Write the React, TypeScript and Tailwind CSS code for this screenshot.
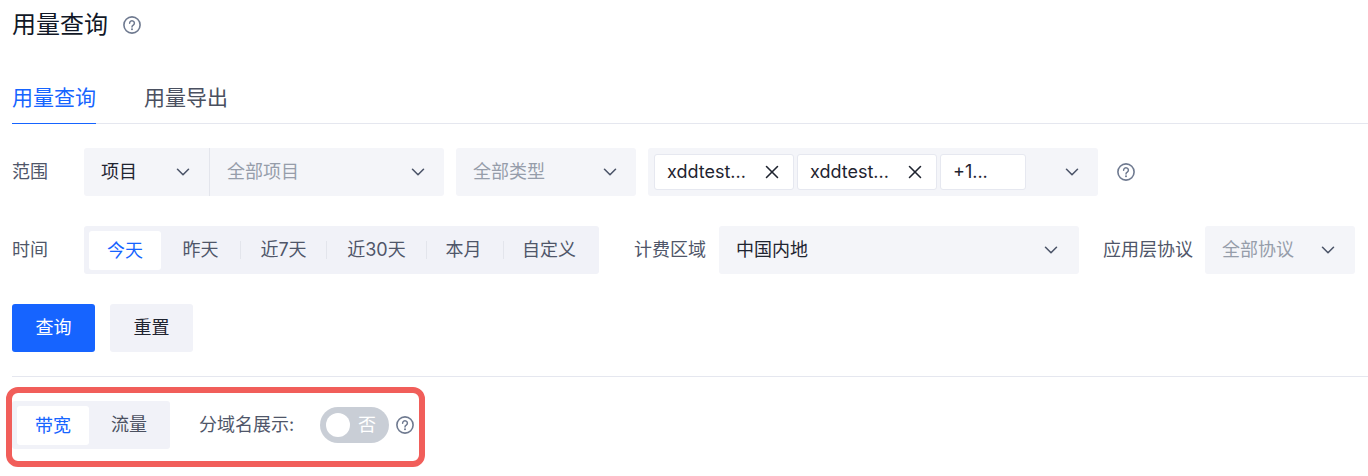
import { ChevronDown, X } from "lucide-react";

const font = "[font-family:Inter,'Noto_Sans_CJK_SC',sans-serif]";

function Help({ className = "" }: { className?: string }) {
  return (
    <svg width="18" height="18" viewBox="0 0 18 18" fill="none" className={className}>
      <circle cx="9" cy="9" r="8.1" stroke="#6f7a90" strokeWidth="1.6" />
      <path d="M6.6 7.2a2.4 2.4 0 1 1 3.7 2c-.8.5-1.3 1-1.3 1.8" stroke="#6f7a90" strokeWidth="1.5" strokeLinecap="round" />
      <circle cx="9" cy="13.2" r="1" fill="#6f7a90" />
    </svg>
  );
}

function Chevron() {
  return <ChevronDown size={22} strokeWidth={1.7} className="text-[#4b5468] shrink-0" />;
}

function Tag({ text, close = true, w }: { text: string; close?: boolean; w: string }) {
  return (
    <div className={`h-9 bg-white border border-[#e6e8f0] rounded-[3px] pl-[12px] pr-[10px] flex items-center justify-between text-[#1f2430] ${w}`}>
      <span>{text}</span>
      {close && <X size={22} strokeWidth={1.7} className="text-[#1f2430]" />}
    </div>
  );
}

export default function App() {
  return (
    <div className={`relative w-[1368px] h-[476px] overflow-hidden bg-white pl-3 text-[18px] leading-6 ${font}`}>
      <div className="h-[51px] pb-[2px] flex items-center gap-[15px] text-[24px] text-[#111827]">
        <span>用量查询</span>
        <Help />
      </div>

      {/* tabs */}
      <div className="mt-[23px] h-[50px] border-b border-[#e5e7ef] flex gap-12 text-[21px] text-[#4a5060]">
        <div className="h-[50px] pt-[12px] border-b border-[#1664ff] text-[#1664ff]">用量查询</div>
        <div className="pt-[12px]">用量导出</div>
      </div>

      {/* scope row */}
      <div className="mt-6 h-12 flex items-center text-[#4f5669]">
        <div className="w-[72px]">范围</div>
        <div className="w-[125px] h-12 bg-[#f4f5f9] rounded-l-[3px] pl-[17px] pr-[15px] flex items-center justify-between text-[#1f2430]">
          <span>项目</span>
          <Chevron />
        </div>
        <div className="w-px h-12 bg-[#e3e5ec]" />
        <div className="w-[234px] h-12 bg-[#f4f5f9] rounded-r-[3px] pl-[17px] pr-[15px] flex items-center justify-between text-[#969daa]">
          <span>全部项目</span>
          <Chevron />
        </div>
        <div className="ml-3 w-[180px] h-12 bg-[#f4f5f9] rounded-[3px] pl-[17px] pr-[15px] flex items-center justify-between text-[#969daa]">
          <span>全部类型</span>
          <Chevron />
        </div>
        <div className="ml-3 w-[450px] h-12 bg-[#f4f5f9] rounded-[3px] pl-[6px] pr-[15px] flex items-center gap-[3px]">
          <Tag text="xddtest..." w="w-[140px]" />
          <Tag text="xddtest..." w="w-[140px]" />
          <Tag text="+1..." close={false} w="w-[86px]" />
          <div className="ml-auto flex"><Chevron /></div>
        </div>
        <Help className="ml-[19px]" />
      </div>

      {/* time row */}
      <div className="mt-[30px] h-12 flex items-center text-[#4f5669]">
        <div className="w-[72px]">时间</div>
        <div className="w-[515px] h-12 bg-[#f1f2f8] rounded-[3px] pl-[5px] flex items-center text-center">
          <div className="w-[72px] h-[39px] bg-white rounded-[3px] text-[#1664ff] leading-[39px]">今天</div>
          <div className="w-[79px]">昨天</div>
          <div className="w-px h-[18px] bg-[#e3e5ec]" />
          <div className="w-[85px]">近7天</div>
          <div className="w-px h-[18px] bg-[#e3e5ec]" />
          <div className="w-[99px]">近30天</div>
          <div className="w-px h-[18px] bg-[#e3e5ec]" />
          <div className="w-[76px] pr-[3px]">本月</div>
          <div className="w-px h-[18px] bg-[#e3e5ec]" />
          <div className="w-[90px]">自定义</div>
        </div>
        <div className="ml-[35px]">计费区域</div>
        <div className="ml-[13px] w-[360px] h-12 bg-[#f4f5f9] rounded-[3px] pl-[17px] pr-[17px] flex items-center justify-between text-[#1f2430]">
          <span>中国内地</span>
          <Chevron />
        </div>
        <div className="ml-6">应用层协议</div>
        <div className="ml-3 w-[150px] h-12 bg-[#f4f5f9] rounded-[3px] pl-[17px] pr-[16px] flex items-center justify-between text-[#969daa]">
          <span>全部协议</span>
          <Chevron />
        </div>
      </div>

      {/* actions */}
      <div className="mt-[30px] flex gap-[15px]">
        <button className="w-[83px] h-12 bg-[#1664ff] text-white rounded-[3px]">查询</button>
        <button className="w-[83px] h-12 bg-[#f1f2f8] text-[#1f2430] rounded-[3px]">重置</button>
      </div>

      <div className="mt-6 border-t border-[#e5e7ef]" />

      {/* chart options */}
      <div className="mt-6 h-12 flex items-center text-[#4f5669]">
        <div className="w-[158px] h-12 bg-[#f1f2f8] rounded-[3px] pl-[5px] flex items-center text-center">
          <div className="w-[72px] h-[39px] bg-white rounded-[3px] text-[#1664ff] leading-[39px]">带宽</div>
          <div className="w-[80px] text-[#4a5060]">流量</div>
        </div>
        <div className="ml-[29px] w-[98px]">分域名展示:</div>
        <div className="ml-[23px] w-[69px] h-9 bg-[#c9ced6] rounded-full pl-[6px] pr-[13px] flex items-center justify-between text-white">
          <div className="w-6 h-6 bg-white rounded-full" />
          <span>否</span>
        </div>
        <Help className="ml-[7px]" />
      </div>

      {/* red highlight box */}
      <div className="absolute left-[6px] top-[387px] w-[419px] h-[80px] border-[6px] border-[#f15e5a] rounded-[12px]" />
    </div>
  );
}
